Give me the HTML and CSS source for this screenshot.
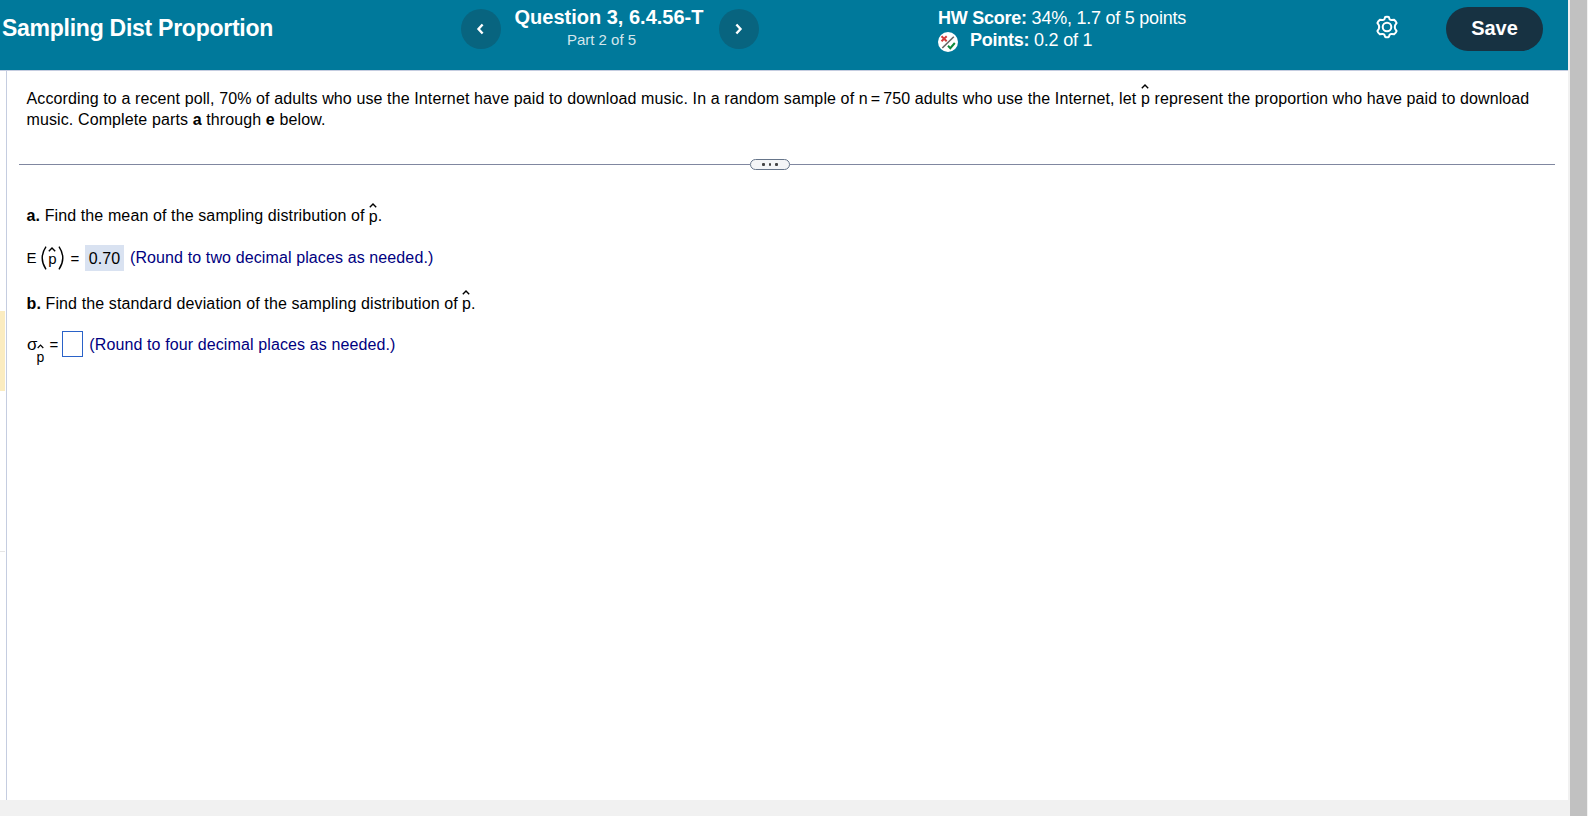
FILE: index.html
```html
<!DOCTYPE html>
<html lang="en">
<head>
<meta charset="utf-8">
<title>Sampling Dist Proportion</title>
<link rel="stylesheet" href="styles.css">
</head>
<body>
<div class="app">
  <div class="page">
    <header class="header">
      <h1 class="title">Sampling Dist Proportion</h1>
      <button class="nav-button" aria-label="Previous"><svg width="40" height="40" viewBox="0 0 40 40"><path d="M21.600 15.500 L17.500 20 L21.600 24.500"/></svg></button>
      <div class="question">
        <div class="question-name">Question 3, 6.4.56-T</div>
        <div class="question-part">Part 2 of 5</div>
      </div>
      <button class="nav-button" aria-label="Next"><svg width="40" height="40" viewBox="0 0 40 40"><path d="M17.400 15.500 L21.500 20 L17.400 24.500"/></svg></button>
      <div class="scores">
        <div class="score"><b>HW Score:</b> 34%, 1.7 of 5 points</div>
        <div class="score points">
          <svg class="mark" width="20" height="20" viewBox="0 0 20 20"><circle cx="10" cy="10" r="10" fill="#fff"/><path d="M3.500 4.300 L8.700 9.200 M8.700 4.300 L3.500 9.200" stroke="#d23c3c" stroke-width="2"/><path d="M4.300 16 L15.800 4.800" stroke="#666" stroke-width="1.600"/><path d="M10 13.800 L12.300 16.200 L16.800 11" fill="none" stroke="#0f8a3c" stroke-width="2"/></svg>
          <span><b>Points:</b> 0.2 of 1</span>
        </div>
      </div>
      <svg class="gear" width="24" height="24" viewBox="0 0 24 24"><path d="M10.200 2Q12 1.400 13.800 2L14.700 4.300Q15.500 5.200 16.700 5.100L19.200 4.800Q21 6 21.600 8L20.100 10.300Q19.500 12 20.100 13.700L21.600 16Q21 18 19.200 19.200L16.700 18.900Q15.500 18.800 14.700 19.700L13.800 22Q12 22.600 10.200 22L9.300 19.700Q8.500 18.800 7.300 18.900L4.800 19.200Q3 18 2.400 16L3.900 13.700Q4.500 12 3.900 10.300L2.400 8Q3 6 4.800 4.800L7.300 5.100Q8.500 5.200 9.300 4.300Z"/><circle cx="12" cy="12" r="4.300"/></svg>
      <button class="save">Save</button>
    </header>
    <div class="body">
      <aside class="rail"><div class="rail-active"></div><div class="rail-line"></div></aside>
      <main class="content">
        <p class="text intro">According to a recent poll, 70% of adults who use the Internet have paid to download music. In a random sample of <span class="eq">n = 750</span> adults who use the Internet, let <span class="hat">p<svg width="8" height="5" viewBox="0 0 8 5"><path d="M.8 4.200 L4 1 L7.200 4.200"/></svg></span> represent the proportion who have paid to download<br>music. Complete parts <b>a</b> through <b>e</b> below.</p>
        <div class="divider"><span class="line line-left"></span><span class="handle"><i></i><i></i><i></i></span><span class="line"></span></div>
        <p class="text part-a"><b>a.</b> Find the mean of the sampling distribution of <span class="hat low">p<svg width="8" height="5" viewBox="0 0 8 5"><path d="M.8 4.200 L4 1 L7.200 4.200"/></svg></span>.</p>
        <div class="text row-mean">
          <span class="e">E</span>
          <svg class="paren open" width="6" height="24" viewBox="0 0 6 24"><path d="M5 .7 Q-2.600 12 5 23.300"/></svg>
          <span class="hat tight">p<svg width="8" height="5" viewBox="0 0 8 5"><path d="M.8 4.200 L4 1 L7.200 4.200"/></svg></span>
          <svg class="paren" width="6" height="24" viewBox="0 0 6 24"><path d="M1 .7 Q8.600 12 1 23.300"/></svg>
          <span class="equals">=</span>
          <span class="answer">0.70</span>
          <span class="hint">(Round to two decimal places as needed.)</span>
        </div>
        <p class="text part-b"><b>b.</b> Find the standard deviation of the sampling distribution of <span class="hat low-b">p<svg width="8" height="5" viewBox="0 0 8 5"><path d="M.8 4.200 L4 1 L7.200 4.200"/></svg></span>.</p>
        <div class="text row-sd">
          <span class="sigma">σ</span>
          <span class="sub"><svg width="7" height="5" viewBox="0 0 8 5"><path d="M.8 4.200 L4 1 L7.200 4.200"/></svg><span>p</span></span>
          <span class="equals">=</span>
          <span class="blank"></span>
          <span class="hint">(Round to four decimal places as needed.)</span>
        </div>
      </main>
    </div>
    <footer class="footer"></footer>
  </div>
  <div class="scrollbar"></div>
</div>
</body>
</html>
```
FILE: styles.css
```css
* { box-sizing: border-box; }
body { margin: 0; background: #f1f1f1; font-family: "Liberation Sans", Arial, sans-serif; color: #000; overflow: hidden; }
.app { display: flex; width: 1588px; height: 816px; }
.page { width: 1568px; display: flex; flex-direction: column; }
.scrollbar { width: 17px; margin-left: 2px; background: #c1c1c1; }
.header { height: 71px; flex: none; display: flex; align-items: flex-start; background: #00799b; border-bottom: 1px solid #c5cde0; color: #fff; white-space: nowrap; }
.title { width: 460.5px; margin: 0; padding: 14px 0 0 2px; font-size: 23px; line-height: 28px; font-weight: bold; letter-spacing: -.26px; }
.nav-button { width: 40px; height: 40px; margin: 9px 0 0; padding: 0; border: 0; border-radius: 50%; background: #08647f; }
.nav-button svg { display: block; }
.nav-button path { fill: none; stroke: #fff; stroke-width: 2.4; }
.question { width: 218px; padding-top: 5px; text-align: center; }
.question-name { font-size: 20px; line-height: 24px; font-weight: bold; padding-right: 1px; }
.question-part { font-size: 15px; line-height: 22px; color: #d5e6ec; padding-right: 16px; }
.scores { width: 437.5px; padding: 7px 0 0 179.5px; }
.score { font-size: 18px; line-height: 22px; letter-spacing: -.24px; }
.points { display: flex; gap: 12px; }
.mark { margin-top: 3px; }
.gear { flex: none; margin: 15px 47px 0 179px; fill: none; stroke: #fff; stroke-width: 2; stroke-linejoin: round; }
.save { width: 97px; height: 44px; margin-top: 7px; padding: 0 0 2px; border: 0; border-radius: 22px; background: #173242; color: #fff; font: bold 20px/24px "Liberation Sans", Arial, sans-serif; }
.body { flex: 1; display: flex; background: #fff; }
.rail { width: 7px; border-right: 1px solid #c5cde0; padding-top: 240px; }
.rail-active { width: 5px; height: 80px; background: #fbecc0; }
.rail-line { width: 5px; height: 1px; margin-top: 160px; background: #e6e6e6; }
.content { flex: 1; padding: 17px 12px 0; }
.footer { height: 16px; background: #f1f1f1; }
.text { font-size: 16px; line-height: 21px; margin: 0 0 0 7.5px; white-space: nowrap; letter-spacing: .115px; }
.eq { word-spacing: -1.6px; }
.hat { position: relative; display: inline-block; }
.hat svg { position: absolute; left: 0; top: -4px; }
.low { top: 1px; margin-left: -.5px; }
.low-b { margin-left: -.5px; }
.low-b svg { top: -3px; }
.tight { font-size: 15px; margin: 0 1px 0 1.5px; }
.tight svg { top: -1px; }
.hat path, .sub path, .paren path { fill: none; stroke: #000; stroke-width: 1.4; }
.divider { display: flex; align-items: center; height: 11px; margin-top: 29px; width: 1536px; }
.line { height: 1px; flex: 1; background: #8087a0; }
.line-left { flex: 0 0 731px; }
.handle { display: flex; align-items: center; justify-content: center; gap: 4px; width: 40px; height: 11px; border: 1px solid #66758a; border-radius: 6px; background: #f4f5f7; }
.handle i { width: 2.5px; height: 3px; border-radius: 1px; background: #444; }
.part-a { margin-top: 35px; }
.low svg { top: -3px; }
.row-mean { display: flex; align-items: center; height: 26px; margin-top: 19px; }
.e { font-size: 15px; margin-top: -1px; }
.open { margin-left: 4px; }
.answer { width: 39px; height: 26px; line-height: 27px; text-align: center; background: #d9e2f1; margin: 0 6px 0 5.5px; }
.equals { font-size: 15px; }
.row-mean .equals { margin-left: 7px; }
.hint { color: #000080; }
.row-mean .hint { margin-top: -2px; }
.part-b { margin-top: 22px; }
.row-sd { display: flex; height: 36px; margin-top: 17px; line-height: 28px; }
.sigma { font-size: 16px; transform: scaleX(1.05); transform-origin: left; }
.sub { display: flex; flex-direction: column; padding-top: 13px; }
.sub span { font-size: 14px; line-height: 16px; }
.row-sd .equals { margin: 0 4px 0 5px; }
.blank { width: 21px; height: 26px; border: 1px solid #2a62c8; margin-right: 6px; }
```
